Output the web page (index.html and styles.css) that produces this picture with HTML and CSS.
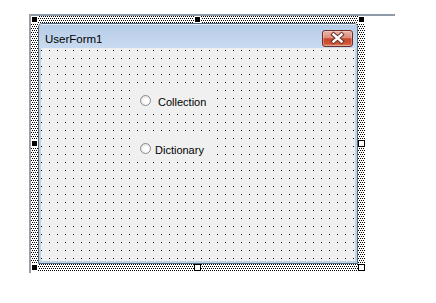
FILE: index.html
```html
<!DOCTYPE html>
<html>
<head>
<meta charset="utf-8">
<title>UserForm1</title>
<link rel="stylesheet" href="styles.css">
</head>
<body>
<div class="designer">
  <div class="frame">
    <div class="form">
      <div class="titlebar">
        <span class="title">UserForm1</span>
        <span class="close">
          <svg width="31" height="17" viewBox="0 0 31 17">
            <path d="M11.5 4.5 L19.5 11.5 M19.5 4.5 L11.5 11.5" stroke="#6a2f27" stroke-width="4.4" stroke-linecap="square" fill="none"/>
            <path d="M11.5 4.5 L19.5 11.5 M19.5 4.5 L11.5 11.5" stroke="#ffffff" stroke-width="2.4" stroke-linecap="square" fill="none"/>
          </svg>
        </span>
      </div>
      <div class="client">
        <label class="option"><span class="radio"></span><span class="caption">&nbsp;Collection</span></label>
        <label class="option"><span class="radio"></span><span class="caption">Dictionary</span></label>
      </div>
    </div>
    <span class="handle handle--dark handle--tl"></span>
    <span class="handle handle--dark handle--tc"></span>
    <span class="handle handle--dark handle--tr"></span>
    <span class="handle handle--dark handle--ml"></span>
    <span class="handle handle--light handle--mr"></span>
    <span class="handle handle--dark handle--bl"></span>
    <span class="handle handle--light handle--bc"></span>
    <span class="handle handle--light handle--br"></span>
  </div>
</div>
</body>
</html>
```
FILE: styles.css
```css
html, body {
  margin: 0;
  background: #ffffff;
}
body {
  font-family: "Liberation Sans", Arial, sans-serif;
  color: #000;
}
.designer {
  margin: 14px 0 0 29px;
  width: 366px;
  height: 259px;
  box-sizing: border-box;
  border-top: 2px solid #8e9aa8;
  border-left: 2px solid #9a9fa6;
}
.frame {
  position: relative;
  width: 334px;
  height: 255px;
  padding: 7px;
  box-sizing: border-box;
  background-color: #ffffff;
  background-image: url("data:image/svg+xml,%3Csvg xmlns='http://www.w3.org/2000/svg' width='2' height='4' shape-rendering='crispEdges'%3E%3Crect width='1' height='1' fill='%23000'/%3E%3Crect x='1' y='2' width='1' height='1' fill='%23000'/%3E%3C/svg%3E");
  background-size: 2px 4px;
}
.form {
  height: 100%;
  box-sizing: border-box;
  display: flex;
  flex-direction: column;
  border: 1px solid #55677a;
  border-radius: 4px 4px 0 0;
  background: #f0f0f0;
  overflow: hidden;
}
.titlebar {
  flex: none;
  height: 24px;
  box-sizing: border-box;
  display: flex;
  align-items: flex-start;
  justify-content: space-between;
  padding: 5px 4px 0 6px;
  background: linear-gradient(#b6cce7, #c9dbf0);
  border-top: 1px solid #e3ecf7;
}
.title {
  margin-top: 3px;
  font-size: 11.5px;
  line-height: 13px;
}
.close {
  display: block;
  width: 31px;
  height: 17px;
  box-sizing: border-box;
  border: 1px solid #6d2f27;
  border-radius: 3px;
  background: linear-gradient(#ebb3a6 0%, #dc8e7d 45%, #c9452c 52%, #cf5639 85%, #e08a6c 100%);
  box-shadow: inset 0 0 0 1px rgba(255, 255, 255, 0.3);
  overflow: hidden;
}
.close svg {
  display: block;
  margin: -1px;
}
.client {
  flex: 1;
  display: flex;
  flex-direction: column;
  gap: 22px;
  padding: 39px 0 0 92px;
  border: 2px solid #bcd4ea;
  border-top: 0;
  background-color: #f0f0f0;
  background-image: url("data:image/svg+xml,%3Csvg xmlns='http://www.w3.org/2000/svg' width='8' height='8' shape-rendering='crispEdges'%3E%3Crect width='1' height='1' fill='%23000'/%3E%3C/svg%3E");
  background-size: 8px 8px;
  background-position: 0 2px;
}
.option {
  display: flex;
  align-items: center;
  width: 82px;
  height: 26px;
  padding-left: 7px;
  box-sizing: border-box;
  background: #f0f0f0;
  font-size: 11px;
}
.radio {
  flex: none;
  width: 11px;
  height: 11px;
  box-sizing: border-box;
  border-radius: 50%;
  border: 1px solid #8b8b8b;
  background: radial-gradient(circle at 60% 60%, #ffffff 0 30%, #e9e9e9 65%, #d5d5d5 100%);
}
.caption {
  margin-left: 4px;
  padding-top: 3px;
}
.handle {
  position: absolute;
  width: 7px;
  height: 7px;
  box-sizing: border-box;
}
.handle--dark {
  background: #000;
  border: 1px solid #fff;
}
.handle--light {
  background: #fff;
  border: 1px solid #000;
}
.handle--tl { left: 0; top: 0; }
.handle--tc { left: 163px; top: 0; }
.handle--tr { right: 0; top: 0; }
.handle--ml { left: 0; top: 124px; }
.handle--mr { right: 0; top: 124px; }
.handle--bl { left: 0; bottom: 0; }
.handle--bc { left: 163px; bottom: 0; }
.handle--br { right: 0; bottom: 0; }
```
